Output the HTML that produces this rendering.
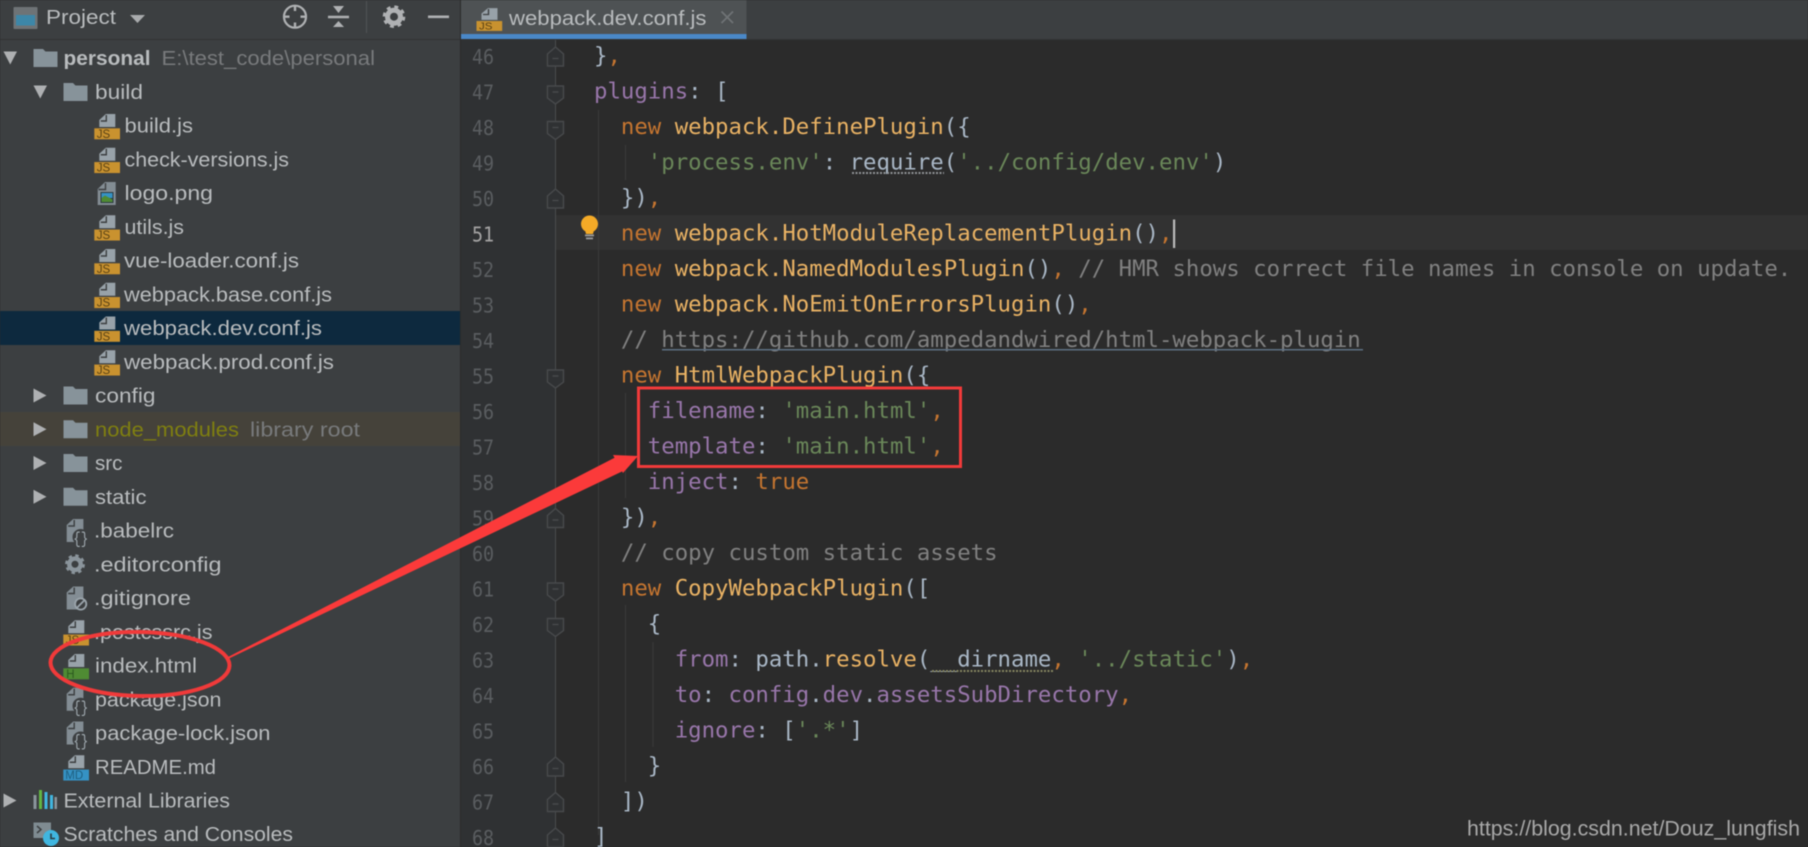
<!DOCTYPE html>
<html><head><meta charset="utf-8"><style>
html,body{margin:0;padding:0;background:#2b2b2b;width:1808px;height:847px;overflow:hidden}
svg{display:block;filter:blur(.6px)}
.s{font-family:"Liberation Sans",sans-serif;font-size:20px;fill:#b9bcbe}
.g{fill:#787a7c}
.c{font-family:"DejaVu Sans Mono","Liberation Mono",monospace;font-size:22.35px;fill:#a9b7c6;white-space:pre}
.n{font-family:"DejaVu Sans Mono","Liberation Mono",monospace;font-size:20px;fill:#5a5d60}
.k{fill:#c57530}.f{fill:#e9b264}.t{fill:#6a8759}.p{fill:#9876aa}.m{fill:#808080}
</style></head><body>
<svg width="1808" height="847" viewBox="0 0 1808 847" xmlns="http://www.w3.org/2000/svg">
<defs>
<g id="pg"><path d="M11.5-11.5H21V1.5H5V-5.5Z" fill="#98a2a9"/><path d="M12-10.5V-4.5H6.5" fill="none" stroke="#3c3f41" stroke-width="1.4"/></g>
<g id="js"><use href="#pg"/><rect x="0" y="2.8" width="25.7" height="11" fill="#c9922f"/><text x="2.5" y="12.4" font-family="Liberation Sans" font-size="11.5" fill="#5a4215">JS</text></g>
<g id="ht"><use href="#pg"/><rect x="0" y="2.8" width="25.7" height="11" fill="#4f8b33"/><text x="3" y="12.4" font-family="Liberation Sans" font-size="11.5" fill="#2c5a20">H</text></g>
<g id="md"><use href="#pg"/><rect x="0" y="2.8" width="25.7" height="11" fill="#3592c4"/><text x="2" y="12.4" font-family="Liberation Sans" font-size="11.5" fill="#1f5f80">MD</text></g>
<g id="cf"><path d="M6.5-11.5H16.7V1H12V11.5H0V-5.5Z" fill="#838d94"/><path d="M7.5-10.5V-4.5H1.5" fill="none" stroke="#3c3f41" stroke-width="1.4"/><circle cx="13.8" cy="6.5" r="8" fill="#3c3f41"/><text x="6.5" y="13" font-family="Liberation Mono" font-size="17" fill="#a3adb3" textLength="15" lengthAdjust="spacingAndGlyphs">{}</text></g>
<g id="gi"><path d="M6.5-11.5H16.7V1H12V11.5H0V-5.5Z" fill="#838d94"/><path d="M7.5-10.5V-4.5H1.5" fill="none" stroke="#3c3f41" stroke-width="1.4"/><circle cx="14" cy="6" r="5.6" fill="#3c3f41" stroke="#9aa4ab" stroke-width="1.8"/><path d="M10 10L18 2" stroke="#9aa4ab" stroke-width="1.8"/></g>
<path id="fo" d="M0-9H9.5L12-6.5H24V9H0Z" fill="#87939a"/>
<path id="op" d="M0-6H13.5L6.75 7Z" fill="#aeb0b2"/>
<path id="cl" d="M0-7L13 0L0 7Z" fill="#aeb0b2"/>
<g id="fa" fill="#2f3133" stroke="#484a4c" stroke-width="1.4"><path d="M-8-11H8V1L0 7L-8 1Z"/><path d="M-3-5H3" fill="none"/></g>
<g id="fe" fill="#2f3133" stroke="#484a4c" stroke-width="1.4"><path d="M-8 4.5H8V-7.5L0-14.5L-8-7.5Z"/><path d="M-3-3H3" fill="none"/></g>
<g id="ge"><circle r="6.5" fill="none" stroke="currentColor" stroke-width="5"/><circle r="9.8" fill="none" stroke="currentColor" stroke-width="3" stroke-dasharray="3.85 3.85"/></g>
</defs>

<!-- backgrounds -->
<rect x="0" y="0" width="460" height="847" fill="#3c3f41"/>
<rect x="460" y="0" width="1" height="847" fill="#2b2b2b"/>
<rect x="461" y="0" width="1347" height="39" fill="#3c3f41"/>
<rect x="461" y="39" width="95" height="808" fill="#2f3133"/>
<rect x="556" y="39" width="1252" height="808" fill="#2b2b2b"/>
<rect x="0" y="39" width="460" height="1" fill="#323334"/>
<rect x="461" y="39" width="1347" height="1" fill="#323334"/>

<!-- header -->
<rect x="13.5" y="7" width="24" height="22" rx="1" fill="#6e7376"/><rect x="16" y="15" width="19" height="10.5" fill="#3d87a8"/>
<text class="s" x="46" y="24" textLength="70" lengthAdjust="spacingAndGlyphs">Project</text>
<path d="M130 15H145L137.5 23Z" fill="#a9abad"/>
<circle cx="295" cy="16.7" r="11" fill="none" stroke="#afb1b3" stroke-width="2.2"/>
<path d="M295 5.5V11M295 22.5V28M284 16.7H289.5M300.5 16.7H306" stroke="#afb1b3" stroke-width="2.4"/>
<path d="M328 17H349" stroke="#afb1b3" stroke-width="2.4"/>
<path d="M333 6H344L338.5 13ZM333 27H344L338.5 21Z" fill="#afb1b3"/>
<rect x="366" y="1" width="1" height="32" fill="#515456"/>
<use href="#ge" x="394" y="16.7" color="#afb1b3"/>
<rect x="428" y="15.5" width="21" height="2.6" fill="#afb1b3"/>

<!-- tab -->
<rect x="461" y="0" width="285.500" height="34" fill="#4e5254"/>
<rect x="461" y="34" width="285.500" height="5" fill="#4a88c7"/>
<g transform="translate(476.5,18.500) scale(1,.9)"><use href="#js"/></g>
<text class="s" x="509" y="25" textLength="197.500" lengthAdjust="spacingAndGlyphs">webpack.dev.conf.js</text>
<path d="M721.500 11.500L733 23M733 11.500L721.500 23" stroke="#6f7375" stroke-width="1.800"/>

<!-- tree rows -->
<rect x="0" y="311" width="460" height="34" fill="#0d293e"/>
<rect x="0" y="412" width="460" height="34" fill="#45423a"/>

<use href="#op" x="3.500" y="57.500"/><use href="#fo" x="33.500" y="58"/>
<text class="s" x="63.500" y="65" font-weight="bold" textLength="87" lengthAdjust="spacingAndGlyphs">personal</text>
<text class="s g" x="161.500" y="65" textLength="213.500" lengthAdjust="spacingAndGlyphs">E:\test_code\personal</text>

<use href="#op" x="33.500" y="91.500"/><use href="#fo" x="63.500" y="92"/>
<text class="s" x="95" y="99" textLength="48" lengthAdjust="spacingAndGlyphs">build</text>

<use href="#js" x="94.300" y="125.500"/><text class="s" x="124.500" y="132.500" textLength="68.500" lengthAdjust="spacingAndGlyphs">build.js</text>
<use href="#js" x="94.300" y="159.250"/><text class="s" x="124.500" y="166.250" textLength="164.500" lengthAdjust="spacingAndGlyphs">check-versions.js</text>
<path d="M105 182H115.700V205H97.700V189Z" fill="#838d94"/><path d="M105.500 183V189.500H98.500" fill="none" stroke="#3c3f41" stroke-width="1.400"/>
<rect x="100.500" y="192" width="13" height="11" fill="#2b3a40"/><rect x="101.500" y="193" width="11" height="5" fill="#3592c4"/><path d="M101.500 198L105 195.500L112.500 199.500V202H101.500Z" fill="#4f8b33"/>
<text class="s" x="124.500" y="200" textLength="88.500" lengthAdjust="spacingAndGlyphs">logo.png</text>
<use href="#js" x="94.300" y="226.750"/><text class="s" x="124.500" y="233.750" textLength="59.500" lengthAdjust="spacingAndGlyphs">utils.js</text>
<use href="#js" x="94.300" y="260.500"/><text class="s" x="124" y="267.500" textLength="175" lengthAdjust="spacingAndGlyphs">vue-loader.conf.js</text>
<use href="#js" x="94.300" y="294.250"/><text class="s" x="124" y="301.250" textLength="208" lengthAdjust="spacingAndGlyphs">webpack.base.conf.js</text>
<use href="#js" x="94.300" y="328"/><text class="s" x="124" y="335" textLength="198" lengthAdjust="spacingAndGlyphs">webpack.dev.conf.js</text>
<use href="#js" x="94.300" y="361.750"/><text class="s" x="124" y="368.750" textLength="210" lengthAdjust="spacingAndGlyphs">webpack.prod.conf.js</text>

<use href="#cl" x="33.500" y="395.500"/><use href="#fo" x="63.500" y="395.500"/>
<text class="s" x="95" y="402.500" textLength="60.500" lengthAdjust="spacingAndGlyphs">config</text>
<use href="#cl" x="33.500" y="429.250"/><use href="#fo" x="63.500" y="429.250"/>
<text class="s" x="95" y="436.250" style="fill:#7f7f10" textLength="144" lengthAdjust="spacingAndGlyphs">node_modules</text>
<text class="s g" x="250" y="436.250" textLength="110" lengthAdjust="spacingAndGlyphs">library root</text>
<use href="#cl" x="33.500" y="463"/><use href="#fo" x="63.500" y="463"/>
<text class="s" x="95" y="470" textLength="27.500" lengthAdjust="spacingAndGlyphs">src</text>
<use href="#cl" x="33.500" y="496.750"/><use href="#fo" x="63.500" y="496.750"/>
<text class="s" x="95" y="503.750" textLength="51.500" lengthAdjust="spacingAndGlyphs">static</text>

<use href="#cf" x="66.700" y="530.500"/><text class="s" x="94" y="537.500" textLength="80" lengthAdjust="spacingAndGlyphs">.babelrc</text>
<g transform="translate(75,564.250) scale(.88)"><use href="#ge" color="#8a949b"/></g><text class="s" x="94" y="571.250" textLength="127.500" lengthAdjust="spacingAndGlyphs">.editorconfig</text>
<use href="#gi" x="66.700" y="598"/><text class="s" x="94" y="605" textLength="97" lengthAdjust="spacingAndGlyphs">.gitignore</text>
<use href="#js" x="63.300" y="631.750"/><text class="s" x="94" y="638.750" textLength="118.500" lengthAdjust="spacingAndGlyphs">.postcssrc.js</text>
<use href="#ht" x="63.300" y="665.500"/><text class="s" x="95" y="672.500" textLength="102" lengthAdjust="spacingAndGlyphs">index.html</text>
<use href="#cf" x="66.700" y="699.250"/><text class="s" x="95" y="706.250" textLength="126.500" lengthAdjust="spacingAndGlyphs">package.json</text>
<use href="#cf" x="66.700" y="733"/><text class="s" x="95" y="740" textLength="175.500" lengthAdjust="spacingAndGlyphs">package-lock.json</text>
<use href="#md" x="63.300" y="766.750"/><text class="s" x="95" y="773.750" textLength="121" lengthAdjust="spacingAndGlyphs">README.md</text>

<use href="#cl" x="3.500" y="800.500"/>
<rect x="33.500" y="795" width="3" height="14" fill="#8a949b"/><rect x="39" y="790" width="3" height="19" fill="#62b543"/><rect x="44.500" y="792" width="3" height="17" fill="#40b6e0"/><rect x="50" y="795" width="3" height="14" fill="#40b6e0"/><rect x="54.500" y="797" width="2.500" height="12" fill="#8a949b"/>
<text class="s" x="63.500" y="807.500" textLength="166.500" lengthAdjust="spacingAndGlyphs">External Libraries</text>
<path d="M33.500 822.500H51V831H47V838H33.500Z" fill="#7f8b91"/><path d="M37 826L41 829.500L37 833" fill="none" stroke="#3c3f41" stroke-width="1.500"/>
<circle cx="51" cy="838" r="8" fill="#40b6e0"/><path d="M51 833.500V838.500H55" fill="none" stroke="#2b3a40" stroke-width="1.600"/>
<text class="s" x="63.500" y="841" textLength="229.500" lengthAdjust="spacingAndGlyphs">Scratches and Consoles</text>

<!-- current line -->
<rect x="556" y="215" width="1252" height="35" fill="#323232"/>

<!-- gutter line + guides -->
<rect x="555" y="40" width="1" height="807" fill="#4a4c4e"/>
<g stroke="#3b3b3b" stroke-width="1">
<path d="M598.500 110V835"/>
<path d="M625.500 145V180M625.500 393V498M625.500 605V782"/>
<path d="M653 642V747"/>
</g>

<!-- fold marks -->
<use href="#fe" x="555.500" y="61.500"/>
<use href="#fa" x="555.500" y="97"/>
<use href="#fa" x="555.500" y="132.500"/>
<use href="#fe" x="555.500" y="203.500"/>
<use href="#fa" x="555.500" y="381"/>
<use href="#fe" x="555.500" y="523"/>
<use href="#fa" x="555.500" y="594"/>
<use href="#fa" x="555.500" y="629.500"/>
<use href="#fe" x="555.500" y="771.500"/>
<use href="#fe" x="555.500" y="807"/>
<use href="#fe" x="555.500" y="842.500"/>

<!-- line numbers -->
<g transform="translate(0,1) scale(.92,1)">
<text class="n" x="513" y="63">46</text><text class="n" x="513" y="98.500">47</text><text class="n" x="513" y="134">48</text><text class="n" x="513" y="169.500">49</text><text class="n" x="513" y="205">50</text>
<text class="n" x="513" y="240.500" style="fill:#a4a3a3">51</text>
<text class="n" x="513" y="276">52</text><text class="n" x="513" y="311.500">53</text><text class="n" x="513" y="347">54</text><text class="n" x="513" y="382.500">55</text><text class="n" x="513" y="418">56</text><text class="n" x="513" y="453.500">57</text><text class="n" x="513" y="489">58</text><text class="n" x="513" y="524.500">59</text><text class="n" x="513" y="560">60</text><text class="n" x="513" y="595.500">61</text><text class="n" x="513" y="631">62</text><text class="n" x="513" y="666.500">63</text><text class="n" x="513" y="702">64</text><text class="n" x="513" y="737.500">65</text><text class="n" x="513" y="773">66</text><text class="n" x="513" y="808.500">67</text><text class="n" x="513" y="844">68</text>
</g>

<!-- bulb -->
<circle cx="589.500" cy="224" r="8.500" fill="#f4aa27"/><path d="M584.500 228H594.500L593 234H586Z" fill="#f4aa27"/>
<rect x="585" y="234.500" width="9" height="1.800" fill="#9a9a9a"/><rect x="586" y="237.500" width="7" height="1.800" fill="#9a9a9a"/>

<!-- code -->
<g xml:space="preserve" transform="translate(-1,1.3)">
<text class="c" xml:space="preserve" x="595" y="61.500">}<tspan class="k">,</tspan></text>
<text class="c" xml:space="preserve" x="595" y="97"><tspan class="p">plugins</tspan>: [</text>
<text class="c" xml:space="preserve" x="621.900" y="132.500"><tspan class="k">new </tspan><tspan class="f">webpack.DefinePlugin</tspan>({</text>
<text class="c" xml:space="preserve" x="648.800" y="168"><tspan class="t">'process.env'</tspan>: require(<tspan class="t">'../config/dev.env'</tspan>)</text>
<text class="c" xml:space="preserve" x="621.900" y="203.500">})<tspan class="k">,</tspan></text>
<text class="c" xml:space="preserve" x="621.900" y="239"><tspan class="k">new </tspan><tspan class="f">webpack.HotModuleReplacementPlugin</tspan>()<tspan class="k">,</tspan></text>
<text class="c" xml:space="preserve" x="621.900" y="274.500"><tspan class="k">new </tspan><tspan class="f">webpack.NamedModulesPlugin</tspan>()<tspan class="k">,</tspan><tspan class="m"> // HMR shows correct file names in console on update.</tspan></text>
<text class="c" xml:space="preserve" x="621.900" y="310"><tspan class="k">new </tspan><tspan class="f">webpack.NoEmitOnErrorsPlugin</tspan>()<tspan class="k">,</tspan></text>
<text class="c" xml:space="preserve" x="621.900" y="345.500"><tspan class="m">// https://github.com/ampedandwired/html-webpack-plugin</tspan></text>
<text class="c" xml:space="preserve" x="621.900" y="381"><tspan class="k">new </tspan><tspan class="f">HtmlWebpackPlugin</tspan>({</text>
<text class="c" xml:space="preserve" x="648.800" y="416.500"><tspan class="p">filename</tspan>: <tspan class="t">'main.html'</tspan><tspan class="k">,</tspan></text>
<text class="c" xml:space="preserve" x="648.800" y="452"><tspan class="p">template</tspan>: <tspan class="t">'main.html'</tspan><tspan class="k">,</tspan></text>
<text class="c" xml:space="preserve" x="648.800" y="487.500"><tspan class="p">inject</tspan>: <tspan class="k">true</tspan></text>
<text class="c" xml:space="preserve" x="621.900" y="523">})<tspan class="k">,</tspan></text>
<text class="c" xml:space="preserve" x="621.900" y="558.500"><tspan class="m">// copy custom static assets</tspan></text>
<text class="c" xml:space="preserve" x="621.900" y="594"><tspan class="k">new </tspan><tspan class="f">CopyWebpackPlugin</tspan>([</text>
<text class="c" xml:space="preserve" x="648.800" y="629.500">{</text>
<text class="c" xml:space="preserve" x="675.700" y="665"><tspan class="p">from</tspan>: path.<tspan class="f">resolve</tspan>(__dirname<tspan class="k">,</tspan> <tspan class="t">'../static'</tspan>)<tspan class="k">,</tspan></text>
<text class="c" xml:space="preserve" x="675.700" y="700.500"><tspan class="p">to</tspan>: <tspan class="p">config</tspan>.<tspan class="p">dev</tspan>.<tspan class="p">assetsSubDirectory</tspan><tspan class="k">,</tspan></text>
<text class="c" xml:space="preserve" x="675.700" y="736"><tspan class="p">ignore</tspan>: [<tspan class="t">'.*'</tspan>]</text>
<text class="c" xml:space="preserve" x="648.800" y="771.500">}</text>
<text class="c" xml:space="preserve" x="621.900" y="807">])</text>
<text class="c" xml:space="preserve" x="595" y="842.500">]</text>
</g>

<!-- underlines -->
<path d="M852 173H944" stroke="#8f9296" stroke-width="2" stroke-dasharray="2 1.500"/>
<path d="M932 671H1053" stroke="#85855f" stroke-width="2" stroke-dasharray="2 1.500"/>
<rect x="662" y="349" width="701" height="1.500" fill="#5c6f82"/>

<!-- caret -->
<rect x="1173" y="219.500" width="2.200" height="28.500" fill="#bbbbbb"/>

<!-- annotations -->
<ellipse cx="140" cy="664" rx="89.500" ry="32" fill="none" stroke="#f03a3a" stroke-width="4" transform="rotate(1 140 664)"/>
<path d="M228 657L616 457L623 471L229 658.500Z" fill="#fb3a3a"/>
<path d="M638 456L613 455L623 473Z" fill="#fb3a3a"/>
<rect x="638.500" y="388" width="322" height="78.500" fill="none" stroke="#f23a3a" stroke-width="3"/>

<text x="1467" y="835.500" font-family="Liberation Sans" font-size="21" fill="#a8a8a8" textLength="333" lengthAdjust="spacingAndGlyphs">https://blog.csdn.net/Douz_lungfish</text>
</svg>
</body></html>
